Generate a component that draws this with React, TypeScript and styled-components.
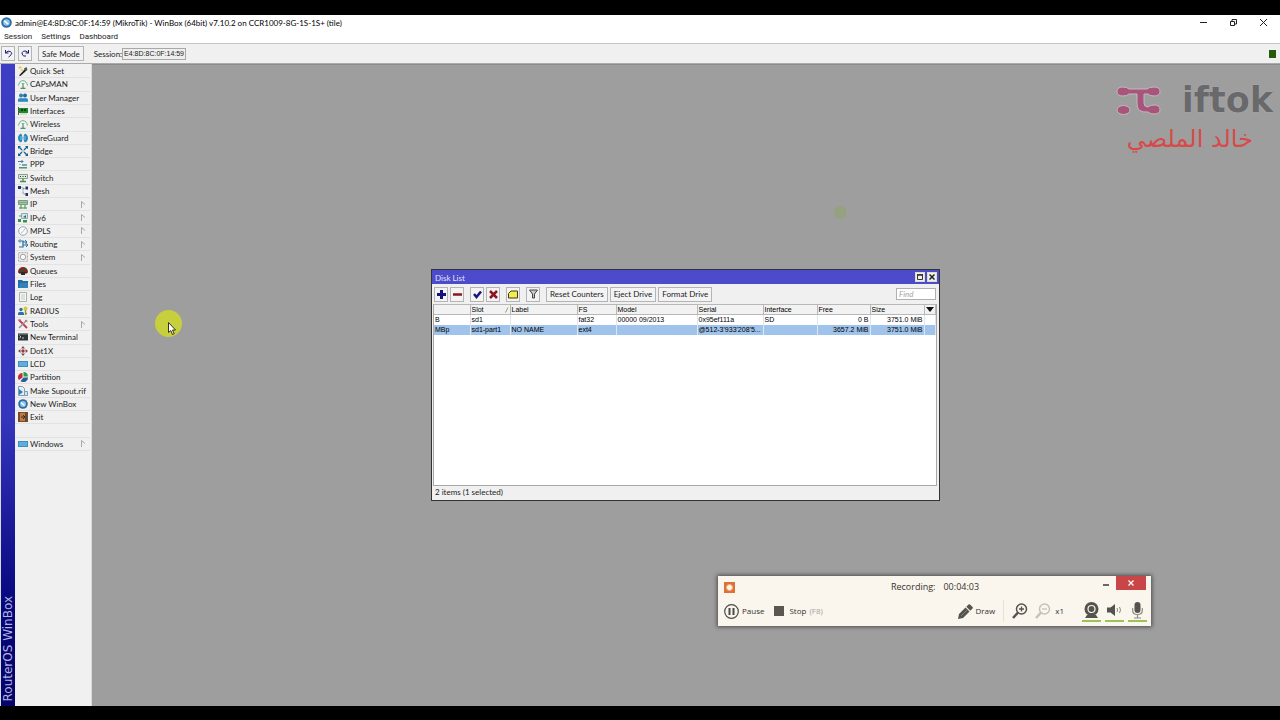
import React from "react";
import styled, { createGlobalStyle } from "styled-components";

const ui = `Lato, "Liberation Sans", Arial, sans-serif`;
const data = `"Liberation Sans", Arial, sans-serif`;
const caption = `Roboto, "Open Sans", sans-serif`;
const segoe = `"Open Sans", "Noto Sans", sans-serif`;

const GlobalStyle = createGlobalStyle`
  *, *::before, *::after { box-sizing: border-box; }
  body { margin: 0; background: #000; }
  button, input { font: inherit; color: inherit; margin: 0; padding: 0; }
  svg { display: block; flex: none; }
`;

const Screen = styled.div`
  min-height: 100vh;
  padding: 15px 0 14px;
  display: flex;
  flex-direction: column;
  background: #000;
  color: #1c1c1c;
  font-family: ${ui};
  font-size: 8px;
  line-height: 12px;
`;

const TitleBar = styled.header`
  display: flex;
  align-items: center;
  height: 15px;
  padding: 0 2px 0 1px;
  background: #fff;
`;

const AppTitle = styled.h1`
  flex: 1;
  margin: 0 0 0 3px;
  font-size: inherit;
  font-weight: 400;
  color: #000;
`;

const CaptionButton = styled.button`
  display: grid;
  place-items: center;
  width: 30px;
  height: 14px;
  border: 0;
  background: transparent;
`;

const MenuBar = styled.nav`
  display: flex;
  gap: 9px;
  height: 13px;
  padding-left: 4px;
  background: #fff;
  font-family: ${caption};
`;

const MenuButton = styled.button`
  border: 0;
  background: transparent;
  line-height: 13px;
`;

const ToolBar = styled.div`
  display: flex;
  align-items: center;
  gap: 3px;
  height: 21px;
  padding: 0 4px 0 1px;
  background: #f0f0f0;
  border-top: 1px solid #c4c4c4;
  border-bottom: 1px solid #aaa;
`;

const Tool = styled.button<{ $wide?: boolean }>`
  display: grid;
  place-items: center;
  width: ${(p) => (p.$wide ? "auto" : "14px")};
  height: 15px;
  padding: ${(p) => (p.$wide ? "0 3px" : "0")};
  border: 1px solid #b4b4b4;
  background: #f3f3f3;
  white-space: nowrap;
  line-height: 12px;
`;

const SafeMode = styled(Tool)`
  margin-left: 3px;
`;

const SessionLabel = styled.label`
  display: flex;
  align-items: center;
  gap: 0;
  margin-left: 7px;
`;

const SessionField = styled.input`
  width: 64px;
  height: 12px;
  padding: 0 1px;
  border: 1px solid #a8a8a8;
  background: #eee;
  font-family: ${data};
  font-size: 7px;
`;

const StatusLight = styled.span`
  width: 7px;
  height: 8px;
  margin-left: auto;
  background: #27590e;
`;

const Workspace = styled.div`
  flex: 1;
  display: flex;
  background: #9e9e9e;
`;

const Brand = styled.div`
  width: 15px;
  border-left: 1px solid #d8d8e8;
  background: linear-gradient(#3e3ec4, #3535bd 55%, #06067c 85%, #04046a);
  color: #b4b4dc;
  font-family: "DejaVu Sans", sans-serif;
  font-size: 12px;
  line-height: 14px;
  display: flex;
  align-items: flex-end;
  padding-bottom: 5px;
`;

const BrandText = styled.span`
  writing-mode: vertical-rl;
  transform: rotate(180deg);
`;

const SideMenu = styled.nav`
  width: 77px;
  padding: 1px 1px 0 0;
  background: #f0f0f0;
  border-right: 1px solid #dcdcdc;
`;

const SideList = styled.ul`
  display: grid;
  grid-template-columns: minmax(0, 1fr);
  grid-auto-rows: 1fr;
  height: 386px;
  margin: 0;
  padding: 0;
  list-style: none;
`;

const SideItem = styled.li`
  display: flex;
  border-bottom: 1px solid #e2e2e2;
`;

const SideButton = styled.button`
  flex: 1;
  min-width: 0;
  display: flex;
  align-items: center;
  gap: 2px;
  padding: 0 4px 0 3px;
  border: 0;
  background: transparent;
  text-align: left;
  white-space: nowrap;
  line-height: 12px;
  span { flex: 1; }
`;

const Desktop = styled.main`
  position: relative;
  flex: 1;
  overflow: hidden;
  border-top: 1px solid #8c8c8c;
  background: #9e9e9e;
`;

const Watermark = styled.div`
  position: absolute;
  top: 14px;
  right: 7px;
  display: grid;
  justify-items: end;
`;

const WatermarkName = styled.div`
  display: flex;
  align-items: center;
  gap: 20px;
  color: #69696c;
  font-family: "DejaVu Sans", sans-serif;
  font-size: 35px;
  font-weight: 700;
  line-height: 43px;
  text-shadow: 0 0 1px #c8c8c8;
`;

const WatermarkArabic = styled.div`
  margin-right: 20px;
  color: #d8494a;
  font-family: "DejaVu Sans", sans-serif;
  font-size: 24px;
  line-height: 34px;
`;

const ClickHalo = styled.div`
  position: absolute;
  left: 63px;
  top: 245px;
  width: 27px;
  height: 27px;
  border-radius: 50%;
  background: #c8cf3c;
`;

const Pointer = styled.svg`
  position: absolute;
  left: 13px;
  top: 12px;
`;

const FadingHalo = styled.div`
  position: absolute;
  left: 742px;
  top: 141px;
  width: 13px;
  height: 13px;
  border-radius: 50%;
  background: #95a180;
`;

const DiskWindow = styled.section`
  position: absolute;
  left: 339px;
  top: 204px;
  width: 509px;
  display: flex;
  flex-direction: column;
  border: 1px solid #333;
  background: #f0f0f0;
`;

const WindowTitle = styled.div`
  display: flex;
  align-items: center;
  gap: 2px;
  height: 14px;
  padding: 0 2px 0 3px;
  background: #4b4bcb;
  color: #e4e4fa;
`;

const WindowName = styled.h2`
  flex: 1;
  margin: 0;
  padding-top: 2px;
  font-size: inherit;
  font-weight: 400;
`;

const WindowButton = styled.button`
  display: grid;
  place-items: center;
  width: 10px;
  height: 10px;
  border: 1px solid #dcdcd0;
  background: #f0f0e8;
`;

const DiskTools = styled.div`
  display: flex;
  align-items: center;
  gap: 2px;
  height: 20px;
  padding: 0 3px 0 2px;
`;

const Gap = styled.span`
  width: 2px;
`;

const FindField = styled.input`
  width: 40px;
  height: 12px;
  margin-left: auto;
  padding: 0 2px;
  border: 1px solid #b0b0b0;
  background: #fff;
  font-style: italic;
  &::placeholder { color: #a4a4a4; opacity: 1; }
`;

const TableArea = styled.div`
  height: 182px;
  margin: 0 2px 0 1px;
  border: 1px solid #a8a8a8;
  border-top: 0;
  background: #fff;
`;

const DiskTable = styled.table`
  width: 100%;
  table-layout: fixed;
  border-collapse: collapse;
  white-space: nowrap;
  color: #000;
  font-family: ${data};
  font-size: 7px;
`;

const HeadCell = styled.th`
  height: 10px;
  padding: 0 1px;
  border: 1px solid #b8b8b8;
  border-left: 0;
  background: #f2f2f2;
  font-weight: 400;
  line-height: 9px;
  text-align: left;
`;

const HeadInner = styled.span`
  display: flex;
  align-items: center;
  justify-content: space-between;
`;

const Row = styled.tr<{ $selected?: boolean }>`
  background: ${(p) => (p.$selected ? "#9fc3ea" : "#fff")};
`;

const Cell = styled.td<{ $right?: boolean }>`
  height: 10px;
  padding: 0 1px;
  overflow: hidden;
  border-right: 1px solid rgba(190, 205, 225, 0.5);
  line-height: 10px;
  text-align: ${(p) => (p.$right ? "right" : "left")};
`;

const WindowStatus = styled.div`
  height: 14px;
  padding: 0 3px;
  line-height: 12px;
`;

const Recorder = styled.section`
  position: absolute;
  left: 626px;
  top: 511px;
  width: 433px;
  height: 50px;
  background: #faf6ee;
  box-shadow: 0 0 4px 1px #4c4c4c;
  color: #35332f;
  font-family: ${segoe};
`;

const RecorderHead = styled.div`
  display: grid;
  grid-template-columns: 1fr auto 1fr;
  align-items: center;
  height: 22px;
  padding: 0 5px 0 6px;
  font-size: 9px;
`;

const RecorderTime = styled.div`
  display: flex;
  gap: 8px;
`;

const RecorderCaption = styled.div`
  display: flex;
  justify-content: flex-end;
  align-self: start;
`;

const RecorderCaptionButton = styled.button<{ $close?: boolean }>`
  display: grid;
  place-items: center;
  width: ${(p) => (p.$close ? "30px" : "20px")};
  height: 14px;
  border: 0;
  background: ${(p) => (p.$close ? "#c84648" : "transparent")};
`;

const RecorderBody = styled.div`
  display: flex;
  align-items: center;
  height: 26px;
  padding: 0 4px 0 6px;
`;

const RecorderButton = styled.button<{ $space: number }>`
  display: flex;
  align-items: center;
  gap: 3px;
  margin-right: ${(p) => p.$space}px;
  border: 0;
  background: transparent;
`;

const Hint = styled.span`
  color: #a39e94;
`;

const Divider = styled.span`
  width: 1px;
  height: 22px;
  margin-right: 8px;
  background: #e6e1d8;
`;

const Spacer = styled.span`
  flex: 1;
`;

const ZoomLevel = styled.span`
  margin-right: 14px;
`;

const DeviceButton = styled.button`
  display: grid;
  place-items: center;
  width: 19px;
  height: 21px;
  margin-left: 4px;
  border: 0;
  border-bottom: 2px solid #9cc356;
  background: transparent;
`;

const shapes: Record<string, React.ReactNode> = {
  wand: (
    <>
      <path d="M1 9.5 7 3l1.500 1.500L2.500 10z" fill="#222" />
      <path d="M6 2.500 8.500 1l1 3-2 1z" fill="#555" />
      <path d="M2 0v3M.5 1.500h3M4 3v2M3 4h2" stroke="#e8c92a" fill="none" />
    </>
  ),
  antenna: (
    <>
      <path d="M.7 6.500a4.300 4.800 0 1 1 8.600 0" fill="#f4faf6" stroke="#6ea884" />
      <path d="M5 4v5M2.500 9.300h5" stroke="#2f7a46" />
      <path d="M3.500 4.500h3" stroke="#7fb592" />
    </>
  ),
  users: (
    <>
      <circle cx="3" cy="2.500" r="2" fill="#2d7fae" />
      <circle cx="7" cy="2.500" r="2" fill="#1f6d9c" />
      <path d="M0 9V7q0-2 2-2h6q2 0 2 2v2z" fill="#4aa3d2" />
      <path d="M0 7h10" stroke="#1f6d9c" />
    </>
  ),
  card: (
    <>
      <path d="M0 2h10v5H0z" fill="#1c8a2a" />
      <path d="M.5 1v8" stroke="#555" />
      <path d="M3 3h2v2H3zM6 3h2v2H6z" fill="#0b3d12" />
      <path d="M2 8h7" stroke="#b9c89a" />
    </>
  ),
  guard: (
    <>
      <path d="M3 .5Q0 2 0 5t3 4.500q1.500-1 1.500-4.500T3 .5zM7 .5q3 1.500 3 4.500T7 9.500Q5.500 8.500 5.500 5T7 .5z" fill="#2a86bb" />
      <path d="M3 3v4M7 3v4" stroke="#7cc3e6" />
    </>
  ),
  bridge: (
    <>
      <path d="M1 1l3 3M9 1 6 4M1 9l3-3M9 9 6 6" stroke="#1d5f8c" strokeWidth="1.300" />
      <path d="M0 0h3L0 3zM10 0v3L7 0zM0 10V7l3 3zM10 10H7l3-3z" fill="#1d5f8c" />
      <path d="M4 5h2" stroke="#6fa7c9" />
    </>
  ),
  ppp: (
    <>
      <path d="M0 2.500h5M3.500 1 5 2.500 3.500 4" fill="none" stroke="#3b7fa6" />
      <path d="M4 5h5v2H4z" fill="#7aa6ba" />
      <path d="M1 8h8v1.500H1z" fill="#4d9b5e" />
      <path d="M1 5.500h2" stroke="#9cbcc8" />
    </>
  ),
  sw: (
    <>
      <path d="M.5 1.500h9v4h-9z" fill="#dfe9df" stroke="#8aa08a" />
      <path d="M2 3.500h1M4.500 3.500h1M7 3.500h1" stroke="#333" />
      <path d="M5 5.500V9M2 8.500h6" stroke="#3f8f4e" strokeWidth="1.300" />
    </>
  ),
  mesh: (
    <>
      <path d="M2 1.500h3M5 1.500V8h3M5 2.500h3" fill="none" stroke="#8a8a9a" strokeDasharray="1 .5" />
      <path d="M0 0h3v3H0zM7.500.5H10v3H7.500zM7.500 7H10v3H7.500z" fill="#1c3472" />
    </>
  ),
  ip: (
    <>
      <path d="M.5 1.500h9v4h-9z" fill="#cfe3cf" stroke="#7e9a7e" />
      <path d="M2 2.500v2M4 2.500v2M6 2.500v2M8 2.500v2" stroke="#2c6a38" />
      <path d="M3 6v3.500M7 6v3.500M1 9h8" stroke="#3f8f4e" />
    </>
  ),
  ipv6: (
    <>
      <path d="M3.500.5h6v5h-6z" fill="#d6e6e6" stroke="#8aa" />
      <path d="M5 4l3-2v3z" fill="#277a6b" />
      <path d="M0 6h3v3H0zM5 7h4v2.500H5z" fill="#3f8f4e" />
      <path d="M1 3h2" stroke="#5b8aa0" />
    </>
  ),
  mpls: (
    <>
      <circle cx="5" cy="5" r="4.300" fill="#f6f8fa" stroke="#9aaab4" />
      <path d="M5 5.500 7.500 2M5 5.500 3 7" stroke="#b6c2ca" fill="none" />
    </>
  ),
  routing: (
    <>
      <path d="M0 2h5v6H1" fill="none" stroke="#2b6f9e" strokeWidth="1.200" />
      <path d="M5 3h4M5 6h4M7 1l2 2-2 1.500M8 4.500 10 6 8 8" fill="none" stroke="#2b6f9e" />
      <path d="M2 0v4" stroke="#6aa0c4" />
    </>
  ),
  gear: (
    <>
      <path d="M.5.500h9v9h-9z" fill="#e6e6e6" stroke="#b4b4b4" strokeDasharray="2 1" />
      <circle cx="5" cy="5" r="2.700" fill="#fafafa" stroke="#a6a6a6" />
    </>
  ),
  queues: (
    <>
      <path d="M0 6a5 5 0 0 1 10 0z" fill="#8c2420" />
      <path d="M2 3.500 5 6l3-3.500" stroke="#1d5a2a" strokeWidth="1.300" fill="none" />
      <path d="M3 6h4v3H3z" fill="#2a2a2a" />
      <path d="M0 6h3v1.500H1zM7 6h3L9 7.500H7z" fill="#5b1a18" />
    </>
  ),
  folder: (
    <>
      <path d="M0 1h4l1 1h5v7H0z" fill="#1f6fa8" />
      <path d="M2 4h8v5H1z" fill="#3482b8" />
    </>
  ),
  log: (
    <>
      <path d="M1.500.5h7v9h-7z" fill="#f4f6f4" stroke="#a9b3ad" />
      <path d="M3 3h4M3 5h4M3 7h4" stroke="#c3cbc6" />
    </>
  ),
  radius: (
    <>
      <circle cx="3" cy="3.500" r="1.700" fill="#2f6fa2" />
      <path d="M0 9V7.500Q0 6 1.500 6h3Q6 6 6 7.500V9z" fill="#2f6fa2" />
      <circle cx="7.500" cy="2.500" r="2" fill="#d9c93a" />
      <path d="M7.500 4v5M7.500 7.500H9" stroke="#7d9a2c" strokeWidth="1.300" />
    </>
  ),
  tools: (
    <>
      <path d="M1 1l8 8" stroke="#c03a4a" strokeWidth="1.800" />
      <path d="M9 1 1 9" stroke="#9a8f94" strokeWidth="1.500" />
      <path d="M0 1h3M7 1l2.500 2" stroke="#d06a76" />
    </>
  ),
  terminal: (
    <>
      <path d="M0 1.500h10v7H0z" fill="#2c3436" />
      <path d="M1.500 3.500 3 5 1.500 6M4 6h2" fill="none" stroke="#dfe6e6" strokeWidth=".8" />
      <path d="M0 2h10" stroke="#7c8688" />
    </>
  ),
  dot1x: (
    <>
      <path d="M5 0l2 2.500H3zM5 10l2-2.500H3zM0 5l2.500-2v4zM10 5 7.500 3v4z" fill="#7a4a52" />
      <circle cx="5" cy="5" r="1.700" fill="#a33340" />
    </>
  ),
  screen: (
    <>
      <path d="M0 2h10v6H0z" fill="#3f8fc6" />
      <path d="M1 3h8v4H1z" fill="#64acdb" />
    </>
  ),
  pie: (
    <>
      <path d="M4.500 5.500V1A4.300 4.300 0 0 0 1 8z" fill="#c22d33" />
      <path d="M5.500 4.500V0A4.500 4.500 0 0 1 10 4.500z" fill="#2b9a4c" />
      <path d="M5.500 5.500H10A4.500 4.500 0 0 1 2.500 9z" fill="#2a5f98" />
    </>
  ),
  supout: (
    <>
      <path d="M.5.500h4l2 2v7h-6z" fill="#e6eef4" stroke="#7b9cb4" />
      <path d="M1 3l4 3-4 3z" fill="#2c7fb8" />
      <path d="M6.500 5.500h3v4h-3z" fill="#d0e2ee" stroke="#7b9cb4" />
    </>
  ),
  winbox: (
    <>
      <circle cx="5" cy="5" r="4.800" fill="#2a6ea6" />
      <circle cx="5" cy="5" r="3" fill="#8fc4e8" />
      <path d="M3 3.500 6.500 6.500" stroke="#fff" strokeWidth="1.300" />
    </>
  ),
  exit: (
    <>
      <path d="M0 0h10v10H0z" fill="#7a4a2c" />
      <path d="M2 1h5v8H2z" fill="#c07a3a" />
      <path d="M3 5h4M5 3l2 2-2 2" stroke="#3a2a22" fill="none" />
      <path d="M8 1v8" stroke="#3d4a50" />
    </>
  ),
};

const Icon = ({ name, size = 10 }: { name: string; size?: number }) => (
  <svg width={size} height={size} viewBox="0 0 10 10" aria-hidden="true">
    {shapes[name]}
  </svg>
);

const sideItems: { label: string; icon: string; sub?: boolean }[] = [
  { label: "Quick Set", icon: "wand" },
  { label: "CAPsMAN", icon: "antenna" },
  { label: "User Manager", icon: "users" },
  { label: "Interfaces", icon: "card" },
  { label: "Wireless", icon: "antenna" },
  { label: "WireGuard", icon: "guard" },
  { label: "Bridge", icon: "bridge" },
  { label: "PPP", icon: "ppp" },
  { label: "Switch", icon: "sw" },
  { label: "Mesh", icon: "mesh" },
  { label: "IP", icon: "ip", sub: true },
  { label: "IPv6", icon: "ipv6", sub: true },
  { label: "MPLS", icon: "mpls", sub: true },
  { label: "Routing", icon: "routing", sub: true },
  { label: "System", icon: "gear", sub: true },
  { label: "Queues", icon: "queues" },
  { label: "Files", icon: "folder" },
  { label: "Log", icon: "log" },
  { label: "RADIUS", icon: "radius" },
  { label: "Tools", icon: "tools", sub: true },
  { label: "New Terminal", icon: "terminal" },
  { label: "Dot1X", icon: "dot1x" },
  { label: "LCD", icon: "screen" },
  { label: "Partition", icon: "pie" },
  { label: "Make Supout.rif", icon: "supout" },
  { label: "New WinBox", icon: "winbox" },
  { label: "Exit", icon: "exit" },
  { label: "", icon: "" },
  { label: "Windows", icon: "screen", sub: true },
];

const columns = [
  { name: "", width: 36 },
  { name: "Slot", width: 40 },
  { name: "Label", width: 67 },
  { name: "FS", width: 39 },
  { name: "Model", width: 81 },
  { name: "Serial", width: 66 },
  { name: "Interface", width: 54 },
  { name: "Free", width: 53 },
  { name: "Size", width: 54 },
];

const disks = [
  ["B", "sd1", "", "fat32", "00000 09/2013", "0x95ef111a", "SD", "0 B", "3751.0 MiB"],
  ["MBp", "sd1-part1", "NO NAME", "ext4", "", "@512-3'933'208'5...", "", "3657.2 MiB", "3751.0 MiB"],
];

const Col = styled.col<{ $width?: number }>`
  width: ${(p) => (p.$width ? `${p.$width}px` : "auto")};
`;

export default function App() {
  return (
    <Screen>
      <GlobalStyle />
      <TitleBar>
        <Icon name="winbox" size={11} />
        <AppTitle>admin@E4:8D:8C:0F:14:59 (MikroTik) - WinBox (64bit) v7.10.2 on CCR1009-8G-1S-1S+ (tile)</AppTitle>
        <CaptionButton aria-label="Minimize">
          <svg width="7" height="7" viewBox="0 0 7 7"><path d="M0 3.500h7" stroke="#222" /></svg>
        </CaptionButton>
        <CaptionButton aria-label="Restore">
          <svg width="7" height="7" viewBox="0 0 7 7" fill="none" stroke="#222"><path d="M.5 2.500h4v4h-4zM2 2V.500h4.500V5H5" /></svg>
        </CaptionButton>
        <CaptionButton aria-label="Close">
          <svg width="7" height="7" viewBox="0 0 7 7"><path d="M0 0l7 7M7 0 0 7" stroke="#222" /></svg>
        </CaptionButton>
      </TitleBar>
      <MenuBar aria-label="Main menu">
        <MenuButton>Session</MenuButton>
        <MenuButton>Settings</MenuButton>
        <MenuButton>Dashboard</MenuButton>
      </MenuBar>
      <ToolBar>
        <Tool aria-label="Undo">
          <svg width="9" height="9" viewBox="0 0 9 9" fill="none" stroke="#1b1b78"><path d="M1.500 1v3h3M1.500 4q2.500-3 5-1.500T6.500 6.500L4.500 8" /></svg>
        </Tool>
        <Tool aria-label="Redo">
          <svg width="9" height="9" viewBox="0 0 9 9" fill="none" stroke="#1b1b78"><path d="M7.500 1v3h-3M7.500 4Q5 1 2.500 2.200T1.500 6Q2.500 7.500 5 7" /></svg>
        </Tool>
        <SafeMode $wide>Safe Mode</SafeMode>
        <SessionLabel>
          Session:
          <SessionField readOnly value="E4:8D:8C:0F:14:59" />
        </SessionLabel>
        <StatusLight />
      </ToolBar>
      <Workspace>
        <Brand>
          <BrandText>RouterOS WinBox</BrandText>
        </Brand>
        <SideMenu aria-label="Sections">
          <SideList>
            {sideItems.map((item, i) => (
              <SideItem key={i}>
                {item.label && (
                  <SideButton>
                    <Icon name={item.icon} />
                    <span>{item.label}</span>
                    {item.sub && (
                      <svg width="5" height="7" viewBox="0 0 5 7" fill="none" stroke="#a8a8a8"><path d="M.5 7V.500l3.500 3" /></svg>
                    )}
                  </SideButton>
                )}
              </SideItem>
            ))}
          </SideList>
        </SideMenu>
        <Desktop>
          <Watermark>
            <WatermarkName>
              <svg width="46" height="30" viewBox="0 0 46 30">
                <g stroke="#c4b8c0" strokeWidth="1" fill="#a8557c">
                  <path d="M7 1q4 0 6 2h18Q33 1 38 1q6 0 6 4.500t-6 4.500q-4 0-6-2h-4v9q0 4 4 4 2-2 6-2 6 0 6 4.500T38 28q-4 0-6-2-11 1-11-8V8h-8Q11 10 7 10 1 10 1 5.500T7 1z" />
                  <ellipse cx="7.500" cy="24" rx="6.500" ry="4.500" />
                </g>
              </svg>
              iftok
            </WatermarkName>
            <WatermarkArabic lang="ar" dir="rtl">خالد الملصي</WatermarkArabic>
          </Watermark>

          <FadingHalo />
          <ClickHalo>
            <Pointer width="9" height="14" viewBox="0 0 9 14">
              <path d="M.5.500v10l2.300-2 1.700 4 1.700-.8-1.700-3.700h3z" fill="#fff" stroke="#3a2f1c" />
            </Pointer>
          </ClickHalo>

          <DiskWindow aria-label="Disk List">
            <WindowTitle>
              <WindowName>Disk List</WindowName>
              <WindowButton aria-label="Maximize window">
                <svg width="6" height="6" viewBox="0 0 6 6"><path d="M.5 1h5v4.500h-5z" fill="none" stroke="#333" /><path d="M0 .8h6" stroke="#333" strokeWidth="1.500" /></svg>
              </WindowButton>
              <WindowButton aria-label="Close window">
                <svg width="6" height="6" viewBox="0 0 6 6"><path d="M.5.500l5 5M5.500.500l-5 5" stroke="#222" strokeWidth="1.500" /></svg>
              </WindowButton>
            </WindowTitle>
            <DiskTools>
              <Tool aria-label="Add"><svg width="9" height="9" viewBox="0 0 9 9"><path d="M4.500 0v9M0 4.500h9" stroke="#14147c" strokeWidth="3" /></svg></Tool>
              <Tool aria-label="Remove"><svg width="9" height="9" viewBox="0 0 9 9"><path d="M0 4.500h9" stroke="#8c1420" strokeWidth="2.500" /></svg></Tool>
              <Gap />
              <Tool aria-label="Enable"><svg width="9" height="9" viewBox="0 0 9 9"><path d="M1 4l2.500 3L8 1.500" fill="none" stroke="#14147c" strokeWidth="2.500" /></svg></Tool>
              <Tool aria-label="Disable"><svg width="9" height="9" viewBox="0 0 9 9"><path d="M1 1l7 7M8 1 1 8" stroke="#8c1420" strokeWidth="2.500" /></svg></Tool>
              <Gap />
              <Tool aria-label="Comment"><svg width="10" height="9" viewBox="0 0 10 9"><path d="M3 1h6.500v7h-9V3.500z" fill="#f3ec4c" stroke="#3c3a14" /></svg></Tool>
              <Gap />
              <Tool aria-label="Filter"><svg width="9" height="10" viewBox="0 0 9 10"><path d="M.5 1h8L5.500 5v4h-2V5z" fill="#c9c9c9" stroke="#444" /></svg></Tool>
              <Gap />
              <Tool $wide>Reset Counters</Tool>
              <Tool $wide>Eject Drive</Tool>
              <Tool $wide>Format Drive</Tool>
              <FindField placeholder="Find" aria-label="Find" />
            </DiskTools>
            <TableArea>
              <DiskTable>
                <colgroup>
                  {columns.map((c, i) => <Col key={i} $width={c.width} />)}
                  <Col />
                </colgroup>
                <thead>
                  <tr>
                    {columns.map((c, i) => (
                      <HeadCell key={i}>
                        <HeadInner>
                          {c.name}
                          {c.name === "Slot" && <svg width="4" height="6" viewBox="0 0 4 6"><path d="M.5 5.500 3 .5" stroke="#999" /></svg>}
                        </HeadInner>
                      </HeadCell>
                    ))}
                    <HeadCell aria-label="Columns"><svg width="8" height="5" viewBox="0 0 8 5"><path d="M0 0h8L4 5z" fill="#111" /></svg></HeadCell>
                  </tr>
                </thead>
                <tbody>
                  {disks.map((row, r) => (
                    <Row key={r} $selected={r === 1}>
                      {row.map((value, c) => <Cell key={c} $right={c > 6}>{value}</Cell>)}
                      <Cell />
                    </Row>
                  ))}
                </tbody>
              </DiskTable>
            </TableArea>
            <WindowStatus>2 items (1 selected)</WindowStatus>
          </DiskWindow>

          <Recorder aria-label="Screen recorder">
            <RecorderHead>
              <svg width="11" height="11" viewBox="0 0 11 11"><path d="M0 0h11v11H0z" fill="#dd7136" /><circle cx="5.500" cy="5.500" r="3" fill="#fff6ea" stroke="#f4b27c" /></svg>
              <RecorderTime><span>Recording:</span><span>00:04:03</span></RecorderTime>
              <RecorderCaption>
                <RecorderCaptionButton aria-label="Minimize recorder"><svg width="6" height="6" viewBox="0 0 6 6"><path d="M0 5h6" stroke="#3a3a3a" strokeWidth="1.500" /></svg></RecorderCaptionButton>
                <RecorderCaptionButton $close aria-label="Close recorder"><svg width="6" height="6" viewBox="0 0 6 6"><path d="M.5.500l5 5M5.500.500l-5 5" stroke="#fff" strokeWidth="1.200" /></svg></RecorderCaptionButton>
              </RecorderCaption>
            </RecorderHead>
            <RecorderBody>
              <RecorderButton $space={10}>
                <svg width="15" height="15" viewBox="0 0 15 15" fill="none" stroke="#4b4a46"><circle cx="7.500" cy="7.500" r="6.800" strokeWidth="1.200" /><path d="M5.500 4v7M9.500 4v7" strokeWidth="2" /></svg>
                Pause
              </RecorderButton>
              <RecorderButton $space={0}>
                <svg width="12" height="10" viewBox="0 0 12 10"><path d="M0 0h10v10H0z" fill="#5a5750" /></svg>
                Stop <Hint>(F8)</Hint>
              </RecorderButton>
              <Spacer />
              <RecorderButton $space={8}>
                <svg width="15" height="15" viewBox="0 0 15 15" fill="#55534e"><path d="M0 15l1-5L7.500 3.500 11.500 7.500 5 14zM8.300 2.700 10.500.5q.7-.7 1.500 0l2.500 2.500q.7.700 0 1.500l-2.200 2.200z" /><path d="M3 12 9.500 5.500" stroke="#8d8a83" strokeWidth=".8" /></svg>
                Draw
              </RecorderButton>
              <Divider />
              <RecorderButton $space={7} aria-label="Zoom in">
                <svg width="16" height="16" viewBox="0 0 16 16" fill="none" stroke="#55534e"><circle cx="9.500" cy="6" r="5" strokeWidth="1.500" /><path d="M6 9.500 1 15" strokeWidth="2.500" /><path d="M7 6h5M9.500 3.500v5" strokeWidth="1.300" /></svg>
              </RecorderButton>
              <RecorderButton $space={4} aria-label="Zoom out">
                <svg width="16" height="16" viewBox="0 0 16 16" fill="none" stroke="#c6c1b8"><circle cx="9.500" cy="6" r="5" strokeWidth="1.500" /><path d="M6 9.500 1 15" strokeWidth="2.500" /><path d="M7 6h5" strokeWidth="1.300" /></svg>
              </RecorderButton>
              <ZoomLevel>x1</ZoomLevel>
              <DeviceButton aria-label="Webcam">
                <svg width="15" height="17" viewBox="0 0 15 17"><circle cx="7.500" cy="7" r="7" fill="#55534e" /><circle cx="7.500" cy="7" r="3.500" fill="none" stroke="#faf6ee" strokeWidth="1.200" /><path d="M1 16l2-3h9l2 3z" fill="#55534e" /></svg>
              </DeviceButton>
              <DeviceButton aria-label="Speaker">
                <svg width="15" height="12" viewBox="0 0 15 12"><path d="M0 3.500h3.500L8 0v12L3.500 8.500H0z" fill="#55534e" /><path d="M10 4q1.200 2 0 4M12.500 3q2 3 0 6" fill="none" stroke="#8d8a83" /></svg>
              </DeviceButton>
              <DeviceButton aria-label="Microphone">
                <svg width="11" height="17" viewBox="0 0 11 17"><rect x="2.500" width="6" height="11" rx="3" fill="#55534e" /><path d="M.700 6v2.500q0 4 4.800 4t4.800-4V6M5.500 12.500V16M2 16h7" fill="none" stroke="#8d8a83" strokeWidth="1.200" /></svg>
              </DeviceButton>
            </RecorderBody>
          </Recorder>
        </Desktop>
      </Workspace>
    </Screen>
  );
}
